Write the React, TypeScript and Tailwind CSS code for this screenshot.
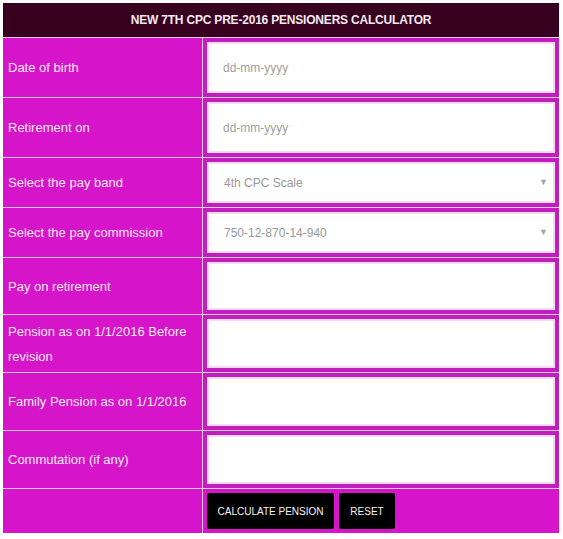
import React from "react";

const font = { fontFamily: '"Liberation Sans", Arial, sans-serif' };

type Row = { label: React.ReactNode; kind: "date" | "select" | "text"; value?: string; h: string };

const rows: Row[] = [
  { label: "Date of birth", kind: "date", h: "h-[60px]" },
  { label: "Retirement on", kind: "date", h: "h-[60px]" },
  { label: "Select the pay band", kind: "select", value: "4th CPC Scale", h: "h-[50px]" },
  { label: "Select the pay commission", kind: "select", value: "750-12-870-14-940", h: "h-[50px]" },
  { label: "Pay on retirement", kind: "text", h: "h-[57px]" },
  { label: "Pension as on 1/1/2016 Before revision", kind: "text", h: "h-[58px]" },
  { label: "Family Pension as on 1/1/2016", kind: "text", h: "h-[58px]" },
  { label: "Commutation (if any)", kind: "text", h: "h-[58px]" },
];

function Field({ row }: { row: Row }) {
  if (row.kind === "select") {
    return (
      <div className="relative h-full">
        <select
          defaultValue={row.value}
          className="h-full w-full appearance-none border-2 border-[#f7d8f5] bg-white pl-[15px] text-[12px] text-[#999] outline-none"
          style={font}
        >
          <option>{row.value}</option>
        </select>
        <span className="pointer-events-none absolute right-[7px] top-1/2 -translate-y-1/2 text-[9px] text-[#a5a5a5]">▼</span>
      </div>
    );
  }
  return (
    <input
      type="text"
      placeholder={row.kind === "date" ? "dd-mm-yyyy" : ""}
      className="h-full w-full border-2 border-[#f7d8f5] bg-white px-[14px] text-[12px] text-[#555] outline-none placeholder:text-[#a0a0a0]"
      style={font}
    />
  );
}

export default function App() {
  return (
    <div className="bg-white p-[3px]" style={font}>
      <div className="w-[556px]">
        <div className="flex h-[34px] items-center justify-center bg-[#38001f] text-[12px] font-bold tracking-[-0.2px] text-[#f3ecf1]">
          NEW 7TH CPC PRE-2016 PENSIONERS CALCULATOR
        </div>
        {rows.map((row, i) => (
          <div key={i} className={`grid grid-cols-[199px_1fr] border-t border-[#f0c8ec] ${row.h}`}>
            <div className="flex items-center bg-[#d614c9] px-[5px] text-[13px] leading-[25px] text-[#fbe9f8]">
              {row.label}
            </div>
            <div className="border-l border-[#f0c8ec] bg-[#c21dbd] p-[4px]">
              <Field row={row} />
            </div>
          </div>
        ))}
        <div className="grid h-[45px] grid-cols-[199px_1fr] border-t border-[#f0c8ec]">
          <div className="bg-[#d614c9]" />
          <div className="flex items-center gap-[5px] border-l border-[#f0c8ec] bg-[#d614c9] pl-[4px]">
            <button className="h-[36px] w-[127px] rounded-[2px] bg-black text-[10px] text-[#f4f4f4]">CALCULATE PENSION</button>
            <button className="h-[36px] w-[56px] rounded-[2px] bg-black text-[10px] text-[#f4f4f4]">RESET</button>
          </div>
        </div>
      </div>
    </div>
  );
}
